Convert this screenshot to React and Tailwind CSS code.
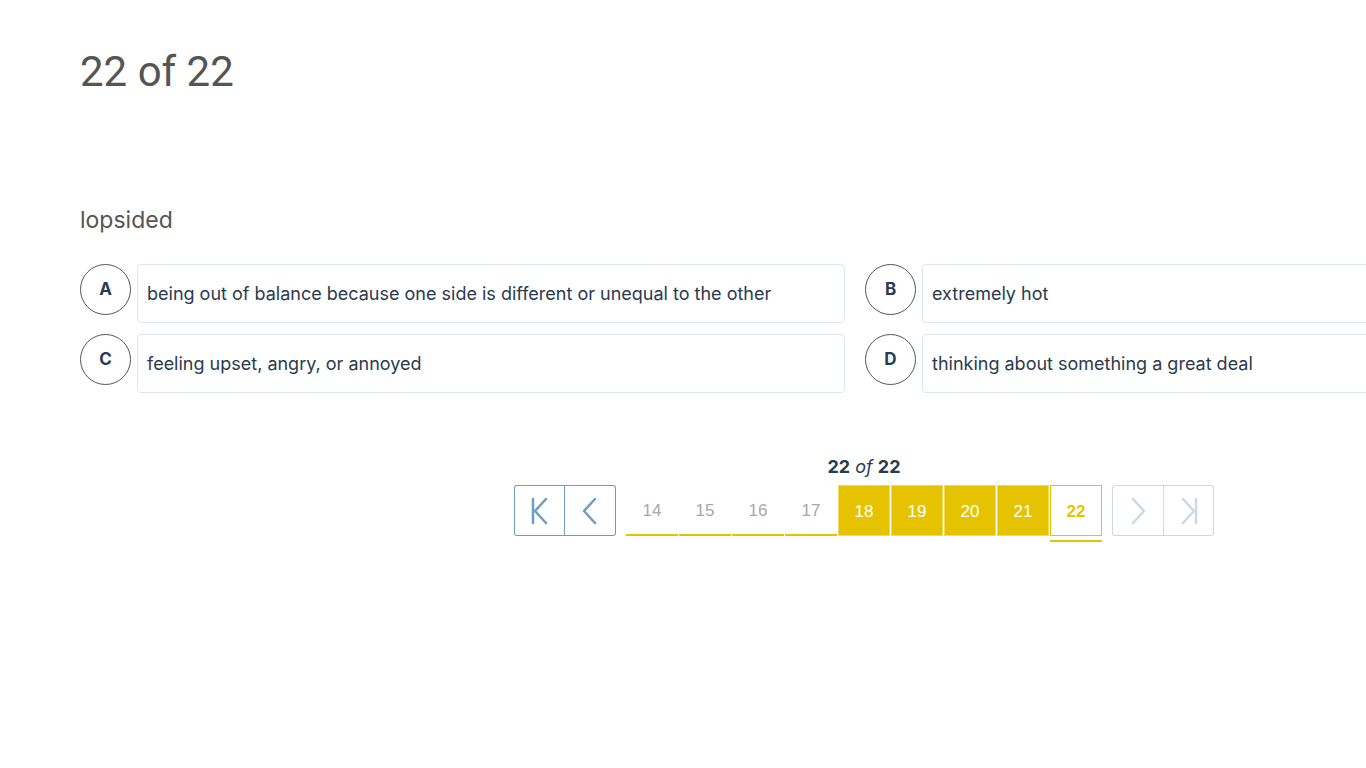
import React from 'react';

const options = [
  { letter: 'A', text: 'being out of balance because one side is different or unequal to the other' },
  { letter: 'B', text: 'extremely hot' },
  { letter: 'C', text: 'feeling upset, angry, or annoyed' },
  { letter: 'D', text: 'thinking about something a great deal' },
];

const pages = [14, 15, 16, 17, 18, 19, 20, 21, 22];
const current = 22;

function FirstIcon({ color }) {
  return (
    <svg width="24" height="30" viewBox="0 0 24 30" fill="none" stroke={color} strokeWidth="2.5" strokeLinecap="round" strokeLinejoin="round">
      <line x1="5" y1="3" x2="5" y2="27" />
      <polyline points="18,3 7,15 18,27" />
    </svg>
  );
}

function PrevIcon({ color }) {
  return (
    <svg width="24" height="30" viewBox="0 0 24 30" fill="none" stroke={color} strokeWidth="2.5" strokeLinecap="round" strokeLinejoin="round">
      <polyline points="17,3 6,15 17,27" />
    </svg>
  );
}

function NextIcon({ color }) {
  return (
    <svg width="24" height="30" viewBox="0 0 24 30" fill="none" stroke={color} strokeWidth="2.5" strokeLinecap="round" strokeLinejoin="round">
      <polyline points="7,3 18,15 7,27" />
    </svg>
  );
}

function LastIcon({ color }) {
  return (
    <svg width="24" height="30" viewBox="0 0 24 30" fill="none" stroke={color} strokeWidth="2.5" strokeLinecap="round" strokeLinejoin="round">
      <polyline points="6,3 17,15 6,27" />
      <line x1="19" y1="3" x2="19" y2="27" />
    </svg>
  );
}

export default function App() {
  return (
    <div className="w-[1366px] h-[768px] overflow-hidden bg-white font-['Inter','Noto_Sans',sans-serif]">
      <div className="w-[1648px] pl-[80px] pt-[47px]">
        <h1 className="font-['Roboto',sans-serif] text-[42px] leading-[50px] text-[#555555] font-normal">22 of 22</h1>

        <p className="mt-[109px] text-[23px] leading-[28px] text-[#555555]">lopsided</p>

        <div className="mt-[30px] grid grid-cols-[765px_765px] gap-x-[20px] gap-y-[11px]">
          {options.map((o) => (
            <div key={o.letter} className="flex items-start gap-[6px]">
              <div className="w-[51px] h-[51px] shrink-0 rounded-full border-[1.5px] border-solid border-[#555555] flex items-center justify-center text-[17px] font-bold text-[#2b3a4e]">
                {o.letter}
              </div>
              <div className="flex-1 h-[59px] rounded-[4px] border border-solid border-[#dde7f0] flex items-center px-[9px] text-[18px] text-[#2b3a4e]">
                {o.text}
              </div>
            </div>
          ))}
        </div>

        <div className="mt-[62px] flex flex-col items-center">
          <div className="text-[18px] leading-[24px] text-[#2b3a4e]">
            <span className="font-bold">22</span> <span className="italic">of</span> <span className="font-bold">22</span>
          </div>
          <div className="mt-[6px] flex items-start font-['Liberation_Sans',Arial,sans-serif]">
            {/* first / prev */}
            <div className="flex gap-[1px] h-[51px] p-[1px] rounded-[3px] bg-[#6e9cc4]">
              <button className="w-[49px] h-full rounded-l-[2px] bg-white flex items-center justify-center">
                <FirstIcon color="#6e9cc4" />
              </button>
              <button className="w-[50px] h-full rounded-r-[2px] bg-white flex items-center justify-center">
                <PrevIcon color="#6e9cc4" />
              </button>
            </div>

            <div className="ml-[10px] flex gap-[1px]">
              {pages.map((p) => {
                if (p === current) {
                  return (
                    <div key={p} className="flex flex-col">
                      <div className="w-[52px] h-[51px] p-[1px] bg-[#e6c300]">
                        <div className="w-full h-full bg-white flex items-center justify-center pt-[3px] text-[17px] font-bold text-[#e6c300]">
                          {p}
                        </div>
                      </div>
                      <div className="mt-[4px] h-[2px] w-[52px] bg-[#e6c300]" />
                    </div>
                  );
                }
                if (p >= 18) {
                  return (
                    <div key={p} className="w-[52px] h-[51px] p-[1px] bg-[#f0d862]">
                      <div className="w-full h-full bg-[#e6c300] flex items-center justify-center pt-[3px] text-[17px] text-white">
                        {p}
                      </div>
                    </div>
                  );
                }
                return (
                  <div key={p} className="w-[52px] h-[51px] flex flex-col">
                    <div className="flex-1 flex items-center justify-center pt-[3px] text-[17px] text-[#a8a8a8]">{p}</div>
                    <div className="h-[2px] bg-[#e6c300]" />
                  </div>
                );
              })}
            </div>

            <div className="ml-[10px] flex gap-[1px] h-[51px] p-[1px] rounded-[3px] bg-[#c9d9e8]">
              <button className="w-[50px] h-full rounded-l-[2px] bg-white flex items-center justify-center">
                <NextIcon color="#c9d9e8" />
              </button>
              <button className="w-[49px] h-full rounded-r-[2px] bg-white flex items-center justify-center">
                <LastIcon color="#c9d9e8" />
              </button>
            </div>
          </div>
        </div>
      </div>
    </div>
  );
}
